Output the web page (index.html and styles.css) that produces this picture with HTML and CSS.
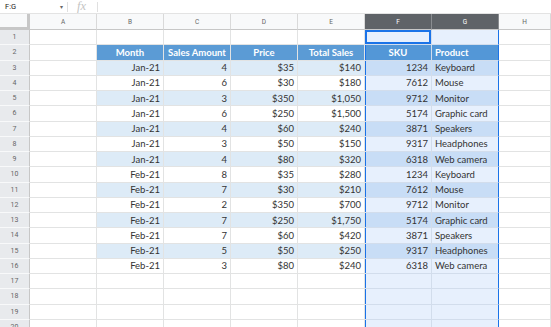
FILE: index.html
```html
<!DOCTYPE html>
<html>
<head>
<meta charset="utf-8">
<link rel="stylesheet" href="styles.css">
</head>
<body>
<div class="app">
  <div class="topbar">
    <div class="namebox"><span class="nb-text">F:G</span><span class="nb-arrow">&#9662;</span></div>
    <div class="sep"></div>
    <div class="fx">fx</div>
    <div class="sep"></div>
  </div>
  <div class="sheet">
    <div class="row colhdr">
      <div class="corner"></div>
      <div class="ch">A</div><div class="ch">B</div><div class="ch">C</div><div class="ch">D</div><div class="ch">E</div><div class="ch sel">F</div><div class="ch sel">G</div><div class="ch">H</div>
    </div>
    <div class="row"><div class="rh">1</div><div class="c"></div><div class="c"></div><div class="c"></div><div class="c"></div><div class="c"></div><div class="c s f active"></div><div class="c s g"></div><div class="c"></div></div>
    <div class="row"><div class="rh">2</div><div class="c"></div><div class="c h">Month</div><div class="c h">Sales Amount</div><div class="c h">Price</div><div class="c h">Total Sales</div><div class="c h s f">SKU</div><div class="c h s g hl">Product</div><div class="c"></div></div>
    <div class="row"><div class="rh">3</div><div class="c"></div><div class="c b n">Jan-21</div><div class="c b n">4</div><div class="c b n">$35</div><div class="c b n">$140</div><div class="c b s f n">1234</div><div class="c b s g t">Keyboard</div><div class="c"></div></div>
    <div class="row"><div class="rh">4</div><div class="c"></div><div class="c n">Jan-21</div><div class="c n">6</div><div class="c n">$30</div><div class="c n">$180</div><div class="c s f n">7612</div><div class="c s g t">Mouse</div><div class="c"></div></div>
    <div class="row"><div class="rh">5</div><div class="c"></div><div class="c b n">Jan-21</div><div class="c b n">3</div><div class="c b n">$350</div><div class="c b n">$1,050</div><div class="c b s f n">9712</div><div class="c b s g t">Monitor</div><div class="c"></div></div>
    <div class="row"><div class="rh">6</div><div class="c"></div><div class="c n">Jan-21</div><div class="c n">6</div><div class="c n">$250</div><div class="c n">$1,500</div><div class="c s f n">5174</div><div class="c s g t">Graphic card</div><div class="c"></div></div>
    <div class="row"><div class="rh">7</div><div class="c"></div><div class="c b n">Jan-21</div><div class="c b n">4</div><div class="c b n">$60</div><div class="c b n">$240</div><div class="c b s f n">3871</div><div class="c b s g t">Speakers</div><div class="c"></div></div>
    <div class="row"><div class="rh">8</div><div class="c"></div><div class="c n">Jan-21</div><div class="c n">3</div><div class="c n">$50</div><div class="c n">$150</div><div class="c s f n">9317</div><div class="c s g t">Headphones</div><div class="c"></div></div>
    <div class="row"><div class="rh">9</div><div class="c"></div><div class="c b n">Jan-21</div><div class="c b n">4</div><div class="c b n">$80</div><div class="c b n">$320</div><div class="c b s f n">6318</div><div class="c b s g t">Web camera</div><div class="c"></div></div>
    <div class="row"><div class="rh">10</div><div class="c"></div><div class="c n">Feb-21</div><div class="c n">8</div><div class="c n">$35</div><div class="c n">$280</div><div class="c s f n">1234</div><div class="c s g t">Keyboard</div><div class="c"></div></div>
    <div class="row"><div class="rh">11</div><div class="c"></div><div class="c b n">Feb-21</div><div class="c b n">7</div><div class="c b n">$30</div><div class="c b n">$210</div><div class="c b s f n">7612</div><div class="c b s g t">Mouse</div><div class="c"></div></div>
    <div class="row"><div class="rh">12</div><div class="c"></div><div class="c n">Feb-21</div><div class="c n">2</div><div class="c n">$350</div><div class="c n">$700</div><div class="c s f n">9712</div><div class="c s g t">Monitor</div><div class="c"></div></div>
    <div class="row"><div class="rh">13</div><div class="c"></div><div class="c b n">Feb-21</div><div class="c b n">7</div><div class="c b n">$250</div><div class="c b n">$1,750</div><div class="c b s f n">5174</div><div class="c b s g t">Graphic card</div><div class="c"></div></div>
    <div class="row"><div class="rh">14</div><div class="c"></div><div class="c n">Feb-21</div><div class="c n">7</div><div class="c n">$60</div><div class="c n">$420</div><div class="c s f n">3871</div><div class="c s g t">Speakers</div><div class="c"></div></div>
    <div class="row"><div class="rh">15</div><div class="c"></div><div class="c b n">Feb-21</div><div class="c b n">5</div><div class="c b n">$50</div><div class="c b n">$250</div><div class="c b s f n">9317</div><div class="c b s g t">Headphones</div><div class="c"></div></div>
    <div class="row"><div class="rh">16</div><div class="c"></div><div class="c n">Feb-21</div><div class="c n">3</div><div class="c n">$80</div><div class="c n">$240</div><div class="c s f n">6318</div><div class="c s g t">Web camera</div><div class="c"></div></div>
    <div class="row"><div class="rh">17</div><div class="c"></div><div class="c"></div><div class="c"></div><div class="c"></div><div class="c"></div><div class="c s f"></div><div class="c s g"></div><div class="c"></div></div>
    <div class="row"><div class="rh">18</div><div class="c"></div><div class="c"></div><div class="c"></div><div class="c"></div><div class="c"></div><div class="c s f"></div><div class="c s g"></div><div class="c"></div></div>
    <div class="row"><div class="rh">19</div><div class="c"></div><div class="c"></div><div class="c"></div><div class="c"></div><div class="c"></div><div class="c s f"></div><div class="c s g"></div><div class="c"></div></div>
    <div class="row"><div class="rh">20</div><div class="c"></div><div class="c"></div><div class="c"></div><div class="c"></div><div class="c"></div><div class="c s f"></div><div class="c s g"></div><div class="c"></div></div>
  </div>
</div>
</body>
</html>
```
FILE: styles.css
```css
* { box-sizing: border-box; }
html, body { margin: 0; padding: 0; background: #fff; overflow: hidden; }
body { width: 551px; height: 327px; }
.app { width: 551px; }

.topbar {
  height: 14px;
  display: flex;
  align-items: center;
  border-bottom: 1px solid #e3e3e3;
  background: #fff;
}
.namebox {
  width: 67px;
  display: flex;
  align-items: center;
  justify-content: space-between;
  padding: 0 4px 0 5px;
  font-family: Roboto, "Liberation Sans", sans-serif;
  font-size: 7.5px;
  color: #222;
}
.nb-arrow { font-size: 6px; color: #666; }
.sep { width: 1px; height: 10px; background: #e0e0e0; }
.fx {
  width: 29px;
  padding-left: 9px;
  font-family: "Liberation Serif", serif;
  font-style: italic;
  font-size: 12.5px;
  color: #c4c4c4;
  line-height: 13px;
}

.sheet { width: 551px; }
.row {
  display: grid;
  grid-template-columns: 30px repeat(7, 67px) 1fr;
  height: 15.25px;
}
.row.colhdr { height: 16px; }

.corner {
  background: #f8f9fa;
  border-right: 3px solid #c7c7c7;
  border-bottom: 3px solid #c7c7c7;
}
.ch {
  background: #f8f9fa;
  border-right: 1px solid #d9d9d9;
  border-bottom: 1px solid #c7c7c7;
  font-family: Roboto, "Liberation Sans", sans-serif;
  font-size: 6.5px;
  color: #666;
  display: flex;
  align-items: center;
  justify-content: center;
}
.ch.sel { background: #5f6368; color: #fff; border-right-color: #8a8d91; }

.rh {
  background: #e8eaed;
  border-right: 1px solid #c7c7c7;
  border-bottom: 1px solid #f8f9fa;
  font-family: Roboto, "Liberation Sans", sans-serif;
  font-size: 7px;
  color: #666;
  display: flex;
  align-items: center;
  justify-content: center;
}

.c {
  border-right: 1px solid #e2e3e3;
  border-bottom: 1px solid #e2e3e3;
  font-family: Lato, "Open Sans", sans-serif;
  font-size: 9.5px;
  color: #333;
  display: flex;
  align-items: center;
  white-space: nowrap;
  overflow: hidden;
}
.n { justify-content: flex-end; padding-right: 3px; }
.t { justify-content: flex-start; padding-left: 3px; }
.b { background: #ddebf7; }
.h {
  background: #5b9bd5;
  color: #fff;
  font-weight: bold;
  justify-content: center;
}
.h.hl { justify-content: flex-start; padding-left: 3px; }

.s { background: #e7f0fd; border-bottom-color: #d2ddec; border-right-color: #d2ddec; }
.s.b { background: #c8ddf6; }
.s.h { background: #5397d7; }
.f { box-shadow: inset 1px 0 0 #1a73e8; }
.g { border-right: 1px solid #1a73e8; }
.active { box-shadow: inset 0 0 0 2px #1a73e8; }
```
